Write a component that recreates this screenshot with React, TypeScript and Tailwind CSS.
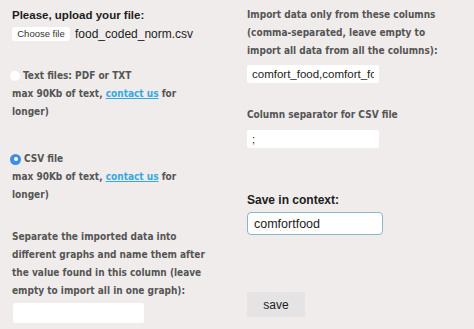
import React from "react";

const label = "text-[#555] font-bold text-[10px] leading-[18px]";

function Radio({ checked }: { checked?: boolean }) {
  return checked ? (
    <span className="inline-flex h-[11px] w-[11px] items-center justify-center rounded-full bg-[#3d8ee6] mr-[3px]">
      <span className="h-[4px] w-[4px] rounded-full bg-white" />
    </span>
  ) : (
    <span className="inline-block h-[10px] w-[10px] rounded-full bg-white mr-[3px]" />
  );
}

export default function App() {
  return (
    <div
      className="w-[474px] h-[329px] bg-[#efeceb] flex overflow-hidden"
      style={{ fontFamily: '"DejaVu Sans Condensed", "DejaVu Sans", Verdana, sans-serif' }}
    >
      {/* left column */}
      <div className="w-[235px] pl-[12px] pt-[6px] flex flex-col">
        <h2
          className="text-[11.5px] font-bold text-[#1d1d1d] leading-[18px]"
          style={{ fontFamily: '"Liberation Sans", Arial, sans-serif' }}
        >
          Please, upload your file:
        </h2>
        <div
          className="flex items-center gap-[5px] mt-[2px] h-[16px]"
          style={{ fontFamily: '"Liberation Sans", Arial, sans-serif' }}
        >
          <button className="bg-white rounded-[3px] h-[14px] w-[58px] text-[9.5px] text-[#333] leading-[14px]">
            Choose file
          </button>
          <span className="text-[12px] text-[#222] leading-[16px]">food_coded_norm.csv</span>
        </div>

        <div className={`${label} flex items-center mt-[25px] -ml-[2px]`}>
          <Radio />
          Text files: PDF or TXT
        </div>
        <p className={label}>
          max 90Kb of text,{" "}
          <a href="#" className="text-[#35a9e0] underline">
            contact us
          </a>{" "}
          for
          <br />
          longer)
        </p>

        <div className={`${label} flex items-center mt-[29px] -ml-[2px]`}>
          <Radio checked />
          CSV file
        </div>
        <p className={label}>
          max 90Kb of text,{" "}
          <a href="#" className="text-[#35a9e0] underline">
            contact us
          </a>{" "}
          for
          <br />
          longer)
        </p>

        <p className={`${label} mt-[24px]`}>
          Separate the imported data into
          <br />
          different graphs and name them after
          <br />
          the value found in this column (leave
          <br />
          empty to import all in one graph):
        </p>
        <input className="mt-[3px] ml-[1px] w-[131px] h-[20px] bg-white rounded-[2px] outline-none" />
      </div>

      {/* right column */}
      <div className="flex-1 pl-[12px] pt-[6px] flex flex-col">
        <p className={label}>
          Import data only from these columns
          <br />
          (comma-separated, leave empty to
          <br />
          import all data from all the columns):
        </p>
        <input
          className="mt-[5px] w-[132px] h-[18px] bg-white rounded-[2px] px-[5px] text-[11.5px] text-[#222] outline-none"
          style={{ fontFamily: '"Liberation Sans", Arial, sans-serif' }}
          defaultValue="comfort_food,comfort_food"
        />
        <p className={`${label} mt-[23px]`}>Column separator for CSV file</p>
        <input
          className="mt-[6px] w-[132px] h-[18px] bg-white rounded-[2px] px-[5px] text-[11px] text-[#222] outline-none"
          style={{ fontFamily: '"Liberation Sans", Arial, sans-serif' }}
          defaultValue=";"
        />
        <h3
          className="mt-[43px] text-[12px] font-bold text-[#1d1d1d] leading-[18px]"
          style={{ fontFamily: '"Liberation Sans", Arial, sans-serif' }}
        >
          Save in context:
        </h3>
        <input
          className="mt-[3px] w-[136px] h-[23px] bg-white rounded-[4px] border border-[#8fb3c9] px-[6px] text-[12.5px] text-[#222] outline-none underline decoration-wavy decoration-[#e04040] decoration-[1px] underline-offset-2"
          style={{ fontFamily: '"Liberation Sans", Arial, sans-serif' }}
          defaultValue="comfortfood"
        />
        <button
          className="mt-[57px] w-[58px] h-[25px] bg-[#e5e3e3] text-[12px] text-[#222]"
          style={{ fontFamily: '"Liberation Sans", Arial, sans-serif' }}
        >
          save
        </button>
      </div>
    </div>
  );
}
